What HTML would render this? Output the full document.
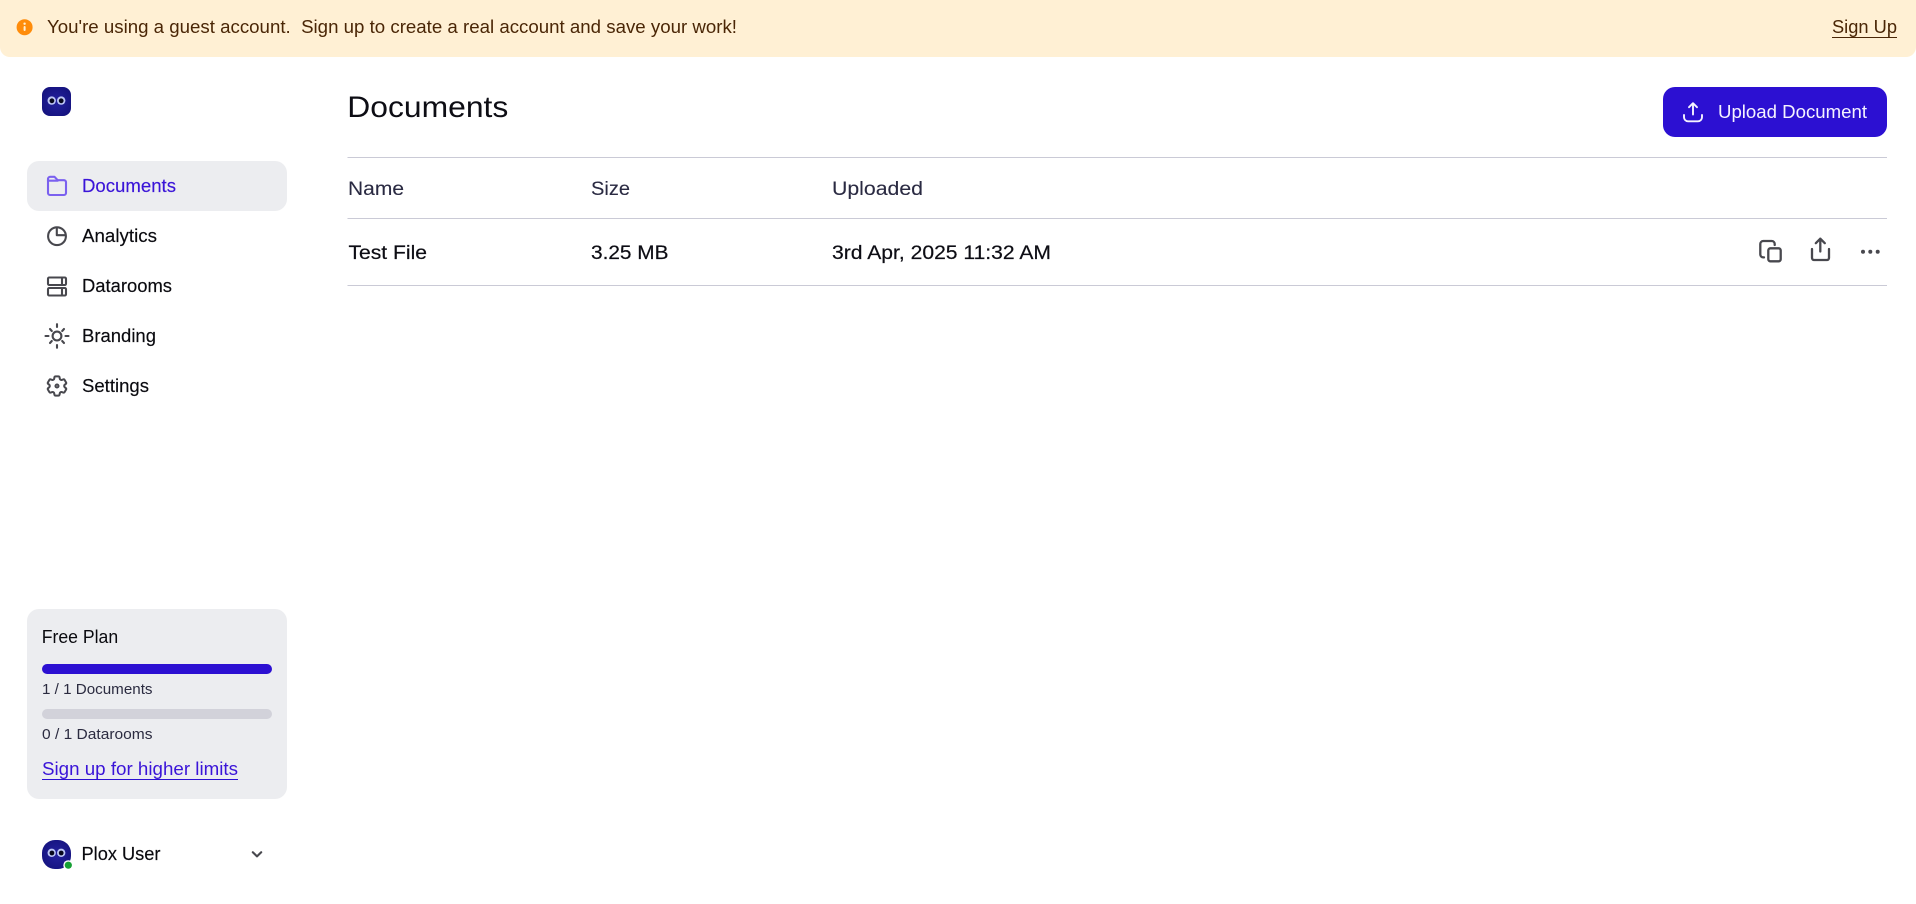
<!DOCTYPE html>
<html lang="en">
<head>
<meta charset="utf-8">
<title>Documents</title>
<style>
html,body{margin:0;padding:0;background:#fff;width:1916px;height:904px;overflow:hidden}
svg{display:block;position:absolute;left:0;top:0}
text{font-family:"Liberation Sans",Arial,sans-serif;white-space:pre}
.nav{font-size:18px;fill:#0a0a0f;stroke:#0a0a0f;stroke-width:.15}
.th{font-size:19px;fill:#2a2a42;stroke:#2a2a42;stroke-width:.1}
.td{font-size:19px;fill:#0d0d14;stroke:#0d0d14;stroke-width:.2}
.sm{font-size:15px;fill:#2b2b40}
.ic{fill:none;stroke:#48484e;stroke-width:2.1;stroke-linecap:round;stroke-linejoin:round}
</style>
</head>
<body>
<svg width="1916" height="904" viewBox="0 0 1916 904" xmlns="http://www.w3.org/2000/svg">
<defs>
<radialGradient id="g" cx="50%" cy="50%" r="62%"><stop offset="0" stop-color="#24219f"/><stop offset="1" stop-color="#14127c"/></radialGradient>
</defs>
<rect width="1916" height="904" fill="#fff"/>

<!-- banner -->
<path d="M0 0H1916V47a10 10 0 0 1-10 10H10A10 10 0 0 1 0 47Z" fill="#fff0d4"/>
<circle cx="24.6" cy="27.2" r="8" fill="#ff8c0a"/>
<circle cx="24.6" cy="23.7" r="1.2" fill="#fff0d4"/>
<rect x="23.6" y="26" width="2" height="5" rx="1" fill="#fff0d4"/>
<text x="47" y="33" font-size="18" fill="#4a2606" textLength="690" lengthAdjust="spacingAndGlyphs">You're using a guest account.  Sign up to create a real account and save your work!</text>
<text x="1832" y="33" font-size="18" fill="#4a2606" textLength="65" lengthAdjust="spacingAndGlyphs">Sign Up</text>
<rect x="1832" y="37" width="65" height="1" fill="#4a2606"/>

<!-- logo -->
<rect x="42" y="87" width="29" height="29" rx="8" fill="url(#g)"/>
<circle cx="51.7" cy="100.6" r="4.2" fill="#bcc5f5"/><circle cx="61.2" cy="100.6" r="4.2" fill="#bcc5f5"/>
<circle cx="51.9" cy="100.8" r="2.4" fill="#08081c"/><circle cx="61.2" cy="100.8" r="2.4" fill="#08081c"/>

<!-- nav -->
<rect x="27" y="161" width="260" height="50" rx="12" fill="#ecedf0"/>
<g fill="none" stroke="#7b61ef" stroke-width="2.1" stroke-linecap="round" stroke-linejoin="round">
<path d="M48 193V179a2.2 2.2 0 0 1 2.2-2.2H54.5l3.2 3.4H64a2 2 0 0 1 2 2V193a2 2 0 0 1-2 2H50a2 2 0 0 1-2-2Z"/>
<path d="M48 180.7H57.7"/>
</g>
<text class="nav" x="82" y="192" style="fill:#3a14d8;stroke:#3a14d8" textLength="94" lengthAdjust="spacingAndGlyphs">Documents</text>

<g class="ic">
<circle cx="57" cy="236.2" r="8.9"/>
<path d="M56.8 227.5V235.2H65.6"/>
</g>
<text class="nav" x="82" y="242" textLength="75" lengthAdjust="spacingAndGlyphs">Analytics</text>

<g class="ic">
<rect x="48" y="277.5" width="18" height="7.5" rx="1.2"/>
<rect x="48" y="288" width="18" height="7.5" rx="1.2"/>
<path d="M62 277.5V285M62 288V295.5"/>
</g>
<text class="nav" x="82" y="292" textLength="90" lengthAdjust="spacingAndGlyphs">Datarooms</text>

<g class="ic">
<circle cx="57" cy="336" r="4.4"/>
<path d="M57 324.2V327M57 345V347.8M45.5 336H48.5M65.5 336H68.5M50 329L51.8 331M62.2 341L64 343M50 343L51.8 341M62.2 331L64 329"/>
</g>
<text class="nav" x="82" y="342" textLength="74" lengthAdjust="spacingAndGlyphs">Branding</text>

<g class="ic" transform="translate(44.15 373.15) scale(1.07)" style="stroke-width:1.9">
<path d="M9.594 3.94c.09-.542.56-.94 1.11-.94h2.593c.55 0 1.02.398 1.11.94l.213 1.281c.063.374.313.686.645.87.074.04.147.083.22.127.324.196.72.257 1.075.124l1.217-.456a1.125 1.125 0 011.37.49l1.296 2.247a1.125 1.125 0 01-.26 1.431l-1.003.827c-.293.24-.438.613-.431.992a6.759 6.759 0 010 .255c-.007.378.138.75.43.99l1.005.828c.424.35.534.954.26 1.43l-1.298 2.247a1.125 1.125 0 01-1.369.491l-1.217-.456c-.355-.133-.75-.072-1.076.124a6.57 6.57 0 01-.22.128c-.331.183-.581.495-.644.869l-.213 1.28c-.09.543-.56.941-1.11.941h-2.594c-.55 0-1.02-.398-1.11-.94l-.213-1.281c-.062-.374-.312-.686-.644-.87a6.52 6.52 0 01-.22-.127c-.325-.196-.72-.257-1.076-.124l-1.217.456a1.125 1.125 0 01-1.369-.49l-1.297-2.247a1.125 1.125 0 01.26-1.431l1.004-.827c.292-.24.437-.613.43-.992a6.932 6.932 0 010-.255c.007-.378-.138-.75-.43-.99l-1.004-.828a1.125 1.125 0 01-.26-1.43l1.297-2.247a1.125 1.125 0 011.37-.491l1.216.456c.356.133.751.072 1.076-.124.072-.044.146-.087.22-.128.332-.183.582-.495.644-.869l.214-1.281z"/>
<circle cx="12" cy="12" r="1.4"/>
</g>
<text class="nav" x="82" y="392" textLength="67" lengthAdjust="spacingAndGlyphs">Settings</text>

<!-- plan card -->
<rect x="27" y="609" width="260" height="190" rx="12" fill="#ecedf0"/>
<text x="41.7" y="643" font-size="18" fill="#0a0a0f" textLength="76.5" lengthAdjust="spacingAndGlyphs">Free Plan</text>
<rect x="42" y="664" width="230" height="10" rx="5" fill="#2c10d2"/>
<text class="sm" x="42" y="694" textLength="110.5" lengthAdjust="spacingAndGlyphs">1 / 1 Documents</text>
<rect x="42" y="709" width="230" height="10" rx="5" fill="#d2d2da"/>
<text class="sm" x="42" y="739" textLength="110.5" lengthAdjust="spacingAndGlyphs">0 / 1 Datarooms</text>
<text x="42" y="775" font-size="18" fill="#3a14d8" textLength="196" lengthAdjust="spacingAndGlyphs">Sign up for higher limits</text>
<rect x="42" y="779" width="196" height="1" fill="#2c10d2"/>

<!-- user -->
<rect x="42" y="840" width="29" height="29" rx="13" fill="url(#g)"/>
<circle cx="51.7" cy="852.8" r="4.2" fill="#bcc5f5"/><circle cx="61.2" cy="852.8" r="4.2" fill="#bcc5f5"/>
<circle cx="51.9" cy="853" r="2.4" fill="#08081c"/><circle cx="61.2" cy="853" r="2.4" fill="#08081c"/>
<circle cx="68.3" cy="865.2" r="5" fill="#fff"/>
<circle cx="68.3" cy="865.2" r="3.6" fill="#16a034"/>
<text x="81.5" y="860" font-size="18" fill="#0a0a0f" stroke="#0a0a0f" stroke-width=".15" textLength="79" lengthAdjust="spacingAndGlyphs">Plox User</text>
<path d="M252.8 852.2L257 856.4L261.2 852.2" fill="none" stroke="#48484e" stroke-width="2.1" stroke-linecap="round" stroke-linejoin="round"/>

<!-- main -->
<text x="347.3" y="117" font-size="29.5" fill="#0d0d14" textLength="161" lengthAdjust="spacingAndGlyphs">Documents</text>
<rect x="1663" y="87" width="224" height="50" rx="12" fill="#2c10d2"/>
<g fill="none" stroke="#f5f3ff" stroke-width="1.9" stroke-linecap="round" stroke-linejoin="round">
<path d="M1693 114.5V103.2M1689 107.2L1693 103.2L1697 107.2"/>
<path d="M1684 115V117.3a4 4 0 0 0 4 4H1698a4 4 0 0 0 4-4V115"/>
</g>
<text x="1718" y="118" font-size="18" fill="#f5f3ff" textLength="149" lengthAdjust="spacingAndGlyphs">Upload Document</text>

<rect x="347.5" y="157" width="1539.5" height="1" fill="#cacad6"/>
<text class="th" x="348" y="195" textLength="56" lengthAdjust="spacingAndGlyphs">Name</text>
<text class="th" x="591" y="195" textLength="39" lengthAdjust="spacingAndGlyphs">Size</text>
<text class="th" x="832" y="195" textLength="91" lengthAdjust="spacingAndGlyphs">Uploaded</text>
<rect x="347.5" y="218" width="1539.5" height="1" fill="#cacad6"/>
<text class="td" x="348.5" y="259" textLength="78.5" lengthAdjust="spacingAndGlyphs">Test File</text>
<text class="td" x="591" y="259" textLength="77.5" lengthAdjust="spacingAndGlyphs">3.25 MB</text>
<text class="td" x="832" y="259" textLength="219" lengthAdjust="spacingAndGlyphs">3rd Apr, 2025 11:32 AM</text>
<rect x="347.5" y="285" width="1539.5" height="1" fill="#cacad6"/>

<!-- row icons -->
<g class="ic" style="stroke-width:2.3">
<rect x="1768.3" y="248.3" width="12.4" height="13" rx="2"/>
<path d="M1764 257.4H1763.3a3 3 0 0 1-3-3V244a3 3 0 0 1 3-3H1771.7a3 3 0 0 1 3 3V245"/>
<path d="M1820.3 251.5V238.7M1815.8 243.2L1820.3 238.7L1824.8 243.2"/>
<path d="M1812 249V258a2 2 0 0 0 2 2H1827a2 2 0 0 0 2-2V249"/>
</g>
<circle cx="1863" cy="251.8" r="2" fill="#48484e"/>
<circle cx="1870.3" cy="251.8" r="2" fill="#48484e"/>
<circle cx="1877.7" cy="251.8" r="2" fill="#48484e"/>
</svg>
</body>
</html>
